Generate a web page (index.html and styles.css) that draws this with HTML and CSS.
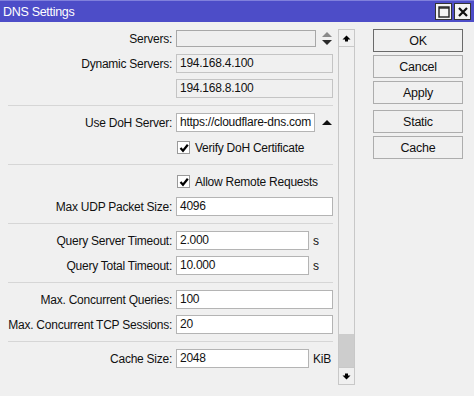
FILE: index.html
```html
<!DOCTYPE html>
<html lang="en">
<head>
  <meta charset="UTF-8">
  <meta name="viewport" content="width=device-width, initial-scale=1.0">
  <title>DNS Settings</title>
  <link rel="stylesheet" href="styles.css">
</head>
<body>
  <div class="window">
    <div class="titlebar">
      <span class="title">DNS Settings</span>
      <div class="tb-buttons">
        <span class="tb-btn">
          <svg width="12" height="12" viewBox="0 0 12 12"><rect x="1" y="1" width="10" height="10" fill="none" stroke="#222" stroke-width="1.4"/><line x1="1" y1="2" x2="11" y2="2" stroke="#222" stroke-width="1.4"/></svg>
        </span>
        <span class="tb-btn">
          <svg width="12" height="12" viewBox="0 0 12 12"><path d="M2 2 L10 10 M10 2 L2 10" stroke="#111" stroke-width="2.2"/></svg>
        </span>
      </div>
    </div>

    <div class="content">
      <div class="form">
        <div class="section first">
          <div class="row">
            <span class="label">Servers:</span>
            <div class="field">
              <div class="input empty"></div>
              <span class="spinner">
                <svg width="12" height="15" viewBox="0 0 12 15"><path d="M1 6 L6 1 L11 6 Z" fill="#8a8a8a"/><path d="M1 9 L6 14 L11 9 Z" fill="#2a2a2a"/></svg>
              </span>
            </div>
          </div>
          <div class="row">
            <span class="label">Dynamic Servers:</span>
            <div class="field"><div class="input readonly">194.168.4.100</div></div>
          </div>
          <div class="row">
            <span class="label"></span>
            <div class="field"><div class="input readonly">194.168.8.100</div></div>
          </div>
        </div>

        <div class="section">
          <div class="row">
            <span class="label">Use DoH Server:</span>
            <div class="field">
              <div class="input clip">https://cloudflare-dns.com</div>
              <span class="arrow-up">
                <svg width="12" height="8" viewBox="0 0 12 8"><path d="M1 6 L6 1 L11 6 Z" fill="#111"/></svg>
              </span>
            </div>
          </div>
          <div class="row">
            <span class="label"></span>
            <div class="field check-field">
              <span class="checkbox">
                <svg width="10" height="10" viewBox="0 0 10 10"><path d="M1.5 5 L4 7.8 L8.8 1.8" fill="none" stroke="#000" stroke-width="2.2"/></svg>
              </span>
              <span>Verify DoH Certificate</span>
            </div>
          </div>
        </div>

        <div class="section">
          <div class="row">
            <span class="label"></span>
            <div class="field check-field">
              <span class="checkbox">
                <svg width="10" height="10" viewBox="0 0 10 10"><path d="M1.5 5 L4 7.8 L8.8 1.8" fill="none" stroke="#000" stroke-width="2.2"/></svg>
              </span>
              <span>Allow Remote Requests</span>
            </div>
          </div>
          <div class="row">
            <span class="label">Max UDP Packet Size:</span>
            <div class="field"><div class="input">4096</div></div>
          </div>
        </div>

        <div class="section">
          <div class="row">
            <span class="label">Query Server Timeout:</span>
            <div class="field"><div class="input">2.000</div><span class="unit">s</span></div>
          </div>
          <div class="row">
            <span class="label">Query Total Timeout:</span>
            <div class="field"><div class="input">10.000</div><span class="unit">s</span></div>
          </div>
        </div>

        <div class="section">
          <div class="row">
            <span class="label">Max. Concurrent Queries:</span>
            <div class="field"><div class="input">100</div></div>
          </div>
          <div class="row">
            <span class="label">Max. Concurrent TCP Sessions:</span>
            <div class="field"><div class="input">20</div></div>
          </div>
        </div>

        <div class="section">
          <div class="row">
            <span class="label">Cache Size:</span>
            <div class="field"><div class="input">2048</div><span class="unit">KiB</span></div>
          </div>
        </div>
      </div>

      <div class="scrollbar">
        <div class="sb-btn">
          <svg width="9" height="7" viewBox="0 0 9 7"><path d="M0.5 4.5 L4.5 0.5 L8.5 4.5 H6 V6.5 H3 V4.5 Z" fill="#000"/></svg>
        </div>
        <div class="sb-track"></div>
        <div class="sb-thumb"></div>
        <div class="sb-btn">
          <svg width="9" height="7" viewBox="0 0 9 7"><path d="M0.5 2.5 L4.5 6.5 L8.5 2.5 H6 V0.5 H3 V2.5 Z" fill="#000"/></svg>
        </div>
      </div>

      <div class="actions">
        <button class="btn default">OK</button>
        <button class="btn">Cancel</button>
        <button class="btn">Apply</button>
        <button class="btn spaced">Static</button>
        <button class="btn">Cache</button>
      </div>
    </div>
  </div>
</body>
</html>
```

FILE: styles.css
```css
body {
  margin: 0;
  font-family: "Liberation Sans", Arial, sans-serif;
  font-size: 12px;
  letter-spacing: -0.25px;
  color: #111;
  background: #f0f0f0;
}
.window {
  width: 474px;
  height: 396px;
  overflow: hidden;
  background: #f0f0f0;
}
.titlebar {
  height: 21px;
  border-top: 1px solid #8080dc;
  background: #4d4dc8;
  display: flex;
  align-items: center;
  justify-content: space-between;
  padding: 0 3px 0 3px;
}
.title {
  color: #fff;
  font-size: 12.5px;
  letter-spacing: -0.3px;
}
.tb-buttons {
  display: flex;
  gap: 2px;
}
.tb-btn {
  width: 15px;
  height: 15px;
  background: #f4f4f4;
  border: 1px solid #333;
  display: flex;
  align-items: center;
  justify-content: center;
}
.content {
  display: flex;
  align-items: flex-start;
}
.form {
  width: 325px;
  padding-left: 8px;
}
.section {
  display: flex;
  flex-direction: column;
  gap: 6px;
  padding: 7px 0;
  border-top: 1px solid #d6d6d6;
}
.section.first {
  border-top: none;
  padding-top: 7px;
}
.row {
  display: grid;
  grid-template-columns: 164px 157px;
  column-gap: 4px;
  height: 19px;
  align-items: center;
}
.label {
  text-align: right;
  white-space: nowrap;
}
.field {
  display: flex;
  align-items: center;
  height: 19px;
}
.input {
  flex: 1;
  height: 17px;
  line-height: 17px;
  border: 1px solid #b4b4b4;
  background: #fff;
  padding: 0 3px;
  white-space: nowrap;
  overflow: hidden;
}
.input.readonly {
  background: #f0f0f0;
  border-color: #c4c4c4;
}
.input.empty {
  background: #efefef;
  border-color: #a8a8a8;
  flex: none;
  width: 132px;
  height: 15px;
}
.input.clip {
  flex: none;
  width: 131px;
}
.spinner {
  margin-left: 5px;
  display: flex;
}
.arrow-up {
  margin-left: 6px;
  display: flex;
}
.unit {
  width: 20px;
  padding-left: 4px;
}
.check-field {
  gap: 5px;
  padding-left: 1px;
}
.checkbox {
  width: 11px;
  height: 11px;
  border: 1px solid #9a9a9a;
  background: #fff;
  display: flex;
  align-items: center;
  justify-content: center;
}
.scrollbar {
  margin: 7px 0 0 5px;
  width: 15px;
  height: 354px;
  border: 1px solid #c8c8c8;
  display: flex;
  flex-direction: column;
  background: #f0f0f0;
}
.sb-btn {
  height: 16px;
  display: flex;
  align-items: center;
  justify-content: center;
  border-bottom: 1px solid #c8c8c8;
}
.sb-btn:last-child {
  border-bottom: none;
  border-top: 1px solid #c8c8c8;
}
.sb-track {
  flex: 1;
}
.sb-thumb {
  height: 33px;
  background: #cdcdcd;
}
.actions {
  margin: 7px 0 0 18px;
  width: 90px;
  display: flex;
  flex-direction: column;
  gap: 3px;
}
.btn {
  height: 23px;
  padding: 0;
  font-family: inherit;
  font-size: 12.5px;
  letter-spacing: -0.25px;
  color: #111;
  background: #f0f0f0;
  border: 1px solid #adadad;
}
.btn.default {
  border-color: #6a6a6a;
}
.btn.spaced {
  margin-top: 3px;
}
```
